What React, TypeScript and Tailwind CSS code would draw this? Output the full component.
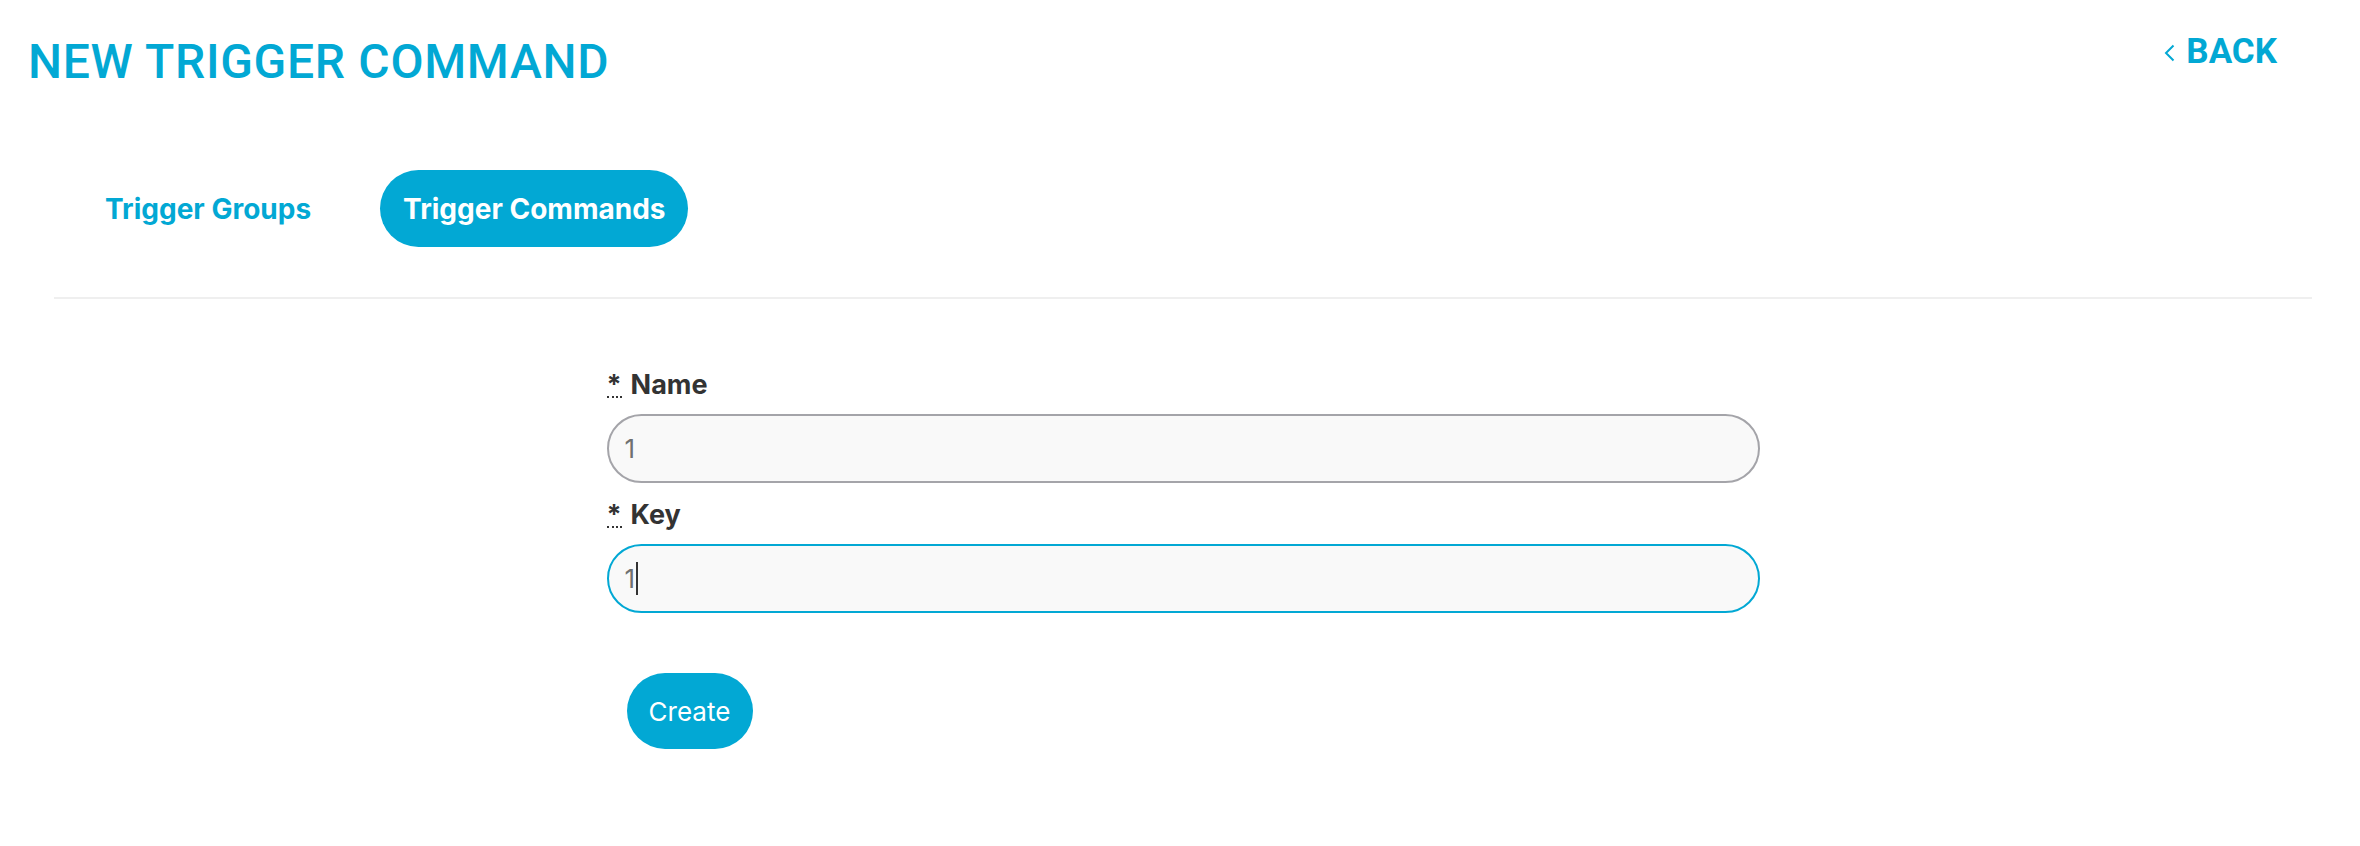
import React from "react";

const CYAN = "text-[#02a8d4]";

export default function App() {
  return (
    <div className="min-h-[846px] w-full bg-white font-['Inter',sans-serif]">
      {/* Header */}
      <div className="flex items-start justify-between pl-[28px] pr-[83px] pt-[32px]">
        <h1 className={`mt-[2px] font-['Roboto',sans-serif] text-[48px] leading-[56px] font-medium tracking-[0.7px] ${CYAN}`}>
          NEW TRIGGER COMMAND
        </h1>
        <a className={`flex items-center gap-[11px] font-['Roboto',sans-serif] text-[35px] leading-[40px] font-bold ${CYAN}`}>
          <svg width="11" height="18" viewBox="0 0 11 18" fill="none" className="mt-[1px]">
            <path d="M9.5 1.5 L2 9 L9.5 16.5" stroke="#02a8d4" strokeWidth="2" />
          </svg>
          BACK
        </a>
      </div>

      {/* Main */}
      <div className="ml-[54px] mr-[48px]">
        <div className="mt-[80px] flex items-center gap-[46px] pl-[28px]">
          <div className={`flex h-[77px] items-center px-[23px] text-[28px] font-bold ${CYAN}`}>
            Trigger Groups
          </div>
          <div className="flex h-[77px] items-center rounded-full bg-[#02a8d4] px-[23px] text-[28px] font-bold text-white">
            Trigger Commands
          </div>
        </div>

        <div className="mt-[50px] h-[2px] bg-[#efefef]" />

        {/* Form */}
        <div className="mx-auto mt-[70px] w-[1153px]">
          <Label text="Name" />
          <div className="mt-[13px] flex h-[69px] items-center rounded-full border-2 border-[#a4a4a9] bg-[#f9f9f9] pl-[16px] text-[26px] font-normal text-[#707070]">
            1
          </div>
          <div className="mt-[16px]">
            <Label text="Key" />
          </div>
          <div className="mt-[13px] flex h-[69px] items-center rounded-full border-2 border-[#02a8d4] bg-[#f9f9f9] pl-[16px] text-[26px] font-normal text-[#707070]">
            1
            <span className="ml-[1px] h-[33px] w-[2px] bg-[#333]" />
          </div>
          <button className="ml-[20px] mt-[60px] flex h-[76px] w-[126px] items-center justify-center rounded-full bg-[#02a8d4] text-[26px] text-white">
            Create
          </button>
        </div>
      </div>
    </div>
  );
}

function Label({ text }: { text: string }) {
  return (
    <div className="flex items-baseline text-[27px] leading-[32px] font-bold text-[#333]">
      <span className="border-b-2 border-dotted border-[#333] leading-[22px]">*</span>
      <span className="ml-[9px]">{text}</span>
    </div>
  );
}
